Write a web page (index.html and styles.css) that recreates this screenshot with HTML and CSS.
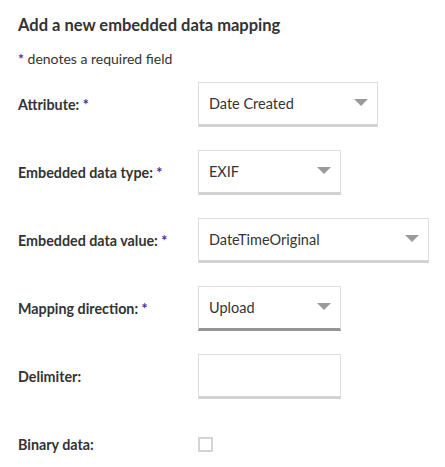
FILE: index.html
```html
<!DOCTYPE html>
<html lang="en">
<head>
  <meta charset="utf-8" />
  <meta name="viewport" content="width=device-width, initial-scale=1" />
  <title>Add a new embedded data mapping</title>
  <link rel="stylesheet" href="styles.css">
</head>
<body>
  <div class="wrap">
    <h1>Add a new embedded data mapping</h1>
    <p class="note"><span class="req">*</span> denotes a required field</p>

    <form class="form">
      <label class="lbl" for="attr">Attribute: <span class="req">*</span></label>
      <div class="select w-md">
        <select id="attr"><option>Date Created</option></select>
        <svg class="arrow" viewBox="0 0 14 7"><path d="M0 0h14L7 7z"/></svg>
      </div>

      <label class="lbl" for="type">Embedded data type: <span class="req">*</span></label>
      <div class="select w-sm">
        <select id="type"><option>EXIF</option></select>
        <svg class="arrow" viewBox="0 0 14 7"><path d="M0 0h14L7 7z"/></svg>
      </div>

      <label class="lbl" for="value">Embedded data value: <span class="req">*</span></label>
      <div class="select w-lg">
        <select id="value"><option>DateTimeOriginal</option></select>
        <svg class="arrow" viewBox="0 0 14 7"><path d="M0 0h14L7 7z"/></svg>
      </div>

      <label class="lbl" for="dir">Mapping direction: <span class="req">*</span></label>
      <div class="select w-sm active">
        <select id="dir"><option>Upload</option></select>
        <svg class="arrow" viewBox="0 0 14 7"><path d="M0 0h14L7 7z"/></svg>
      </div>

      <label class="lbl" for="delim">Delimiter:</label>
      <div class="w-sm">
        <input type="text" id="delim" />
      </div>

      <label class="lbl" for="binary">Binary data:</label>
      <div class="check-row">
        <input type="checkbox" id="binary" class="check" />
      </div>
    </form>
  </div>
</body>
</html>
```

FILE: styles.css
```css
:root { --text:#333; --req:#4a2b9b; --line:#dedede; --under:#d2d2d2; --arrow:#9a9a9a; }
body { margin:0; font-family: Lato, "Open Sans", sans-serif; color:var(--text); background:#fff; }
.wrap { padding: 13px 18px 0; }
h1 { margin: 0; font-size: 16.5px; font-weight: 700; line-height: 24px; }
.note { margin: 13px 0 0; font-size: 14px; line-height: 18px; }
.note .req { font-weight: 700; }
.req { color: var(--req); }
.form { display: grid; grid-template-columns: 180px auto; grid-auto-rows: 45px; row-gap: 23px; align-items: center; justify-items: start; margin-top: 14px; }
.lbl { font-size: 14.3px; font-weight: 700; }
.select { position: relative; height: 45px; }
.select select, input[type="text"] { appearance: none; -webkit-appearance: none; width: 100%; height: 45px; box-sizing: border-box; margin: 0; border: 1px solid var(--line); border-bottom: 3px solid var(--under); border-radius: 0; background: #fff; padding: 0 30px 0 10px; font-family: inherit; font-size: 14.5px; color: var(--text); outline: none; }
.select.active select { border-bottom-color: #959595; }
.arrow { position: absolute; right: 10px; top: 17px; width: 14px; height: 7px; fill: var(--arrow); pointer-events: none; }
.w-sm { width: 143px; }
.w-md { width: 180px; }
.w-lg { width: 231px; }
.check-row { display: flex; align-items: center; height: 45px; }
.check { appearance: none; -webkit-appearance: none; width: 15px; height: 15px; margin: 0; border: 2px solid #d4d4d4; box-sizing: border-box; background: #fff; }
```
